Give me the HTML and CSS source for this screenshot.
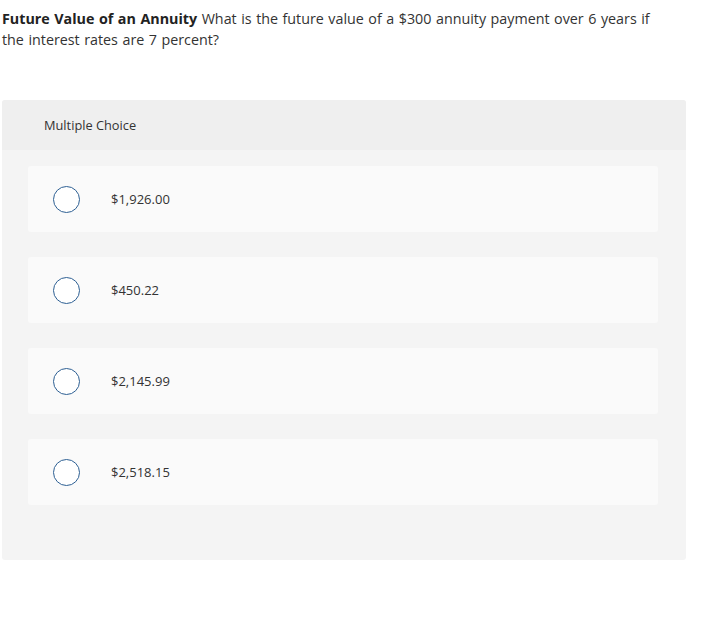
FILE: index.html
```html
<!DOCTYPE html>
<html>
<head>
<meta charset="utf-8">
<link rel="stylesheet" href="styles.css">
</head>
<body>
<div class="page">
  <p class="question"><strong>Future Value of an Annuity</strong> What is the future value of a $300 annuity payment over 6 years if the interest rates are 7 percent?</p>
  <div class="card">
    <div class="card-head">Multiple Choice</div>
    <div class="card-body">
      <div class="option"><span class="radio"></span><span class="label">$1,926.00</span></div>
      <div class="option"><span class="radio"></span><span class="label">$450.22</span></div>
      <div class="option"><span class="radio"></span><span class="label">$2,145.99</span></div>
      <div class="option"><span class="radio"></span><span class="label">$2,518.15</span></div>
    </div>
  </div>
</div>
</body>
</html>
```

FILE: styles.css
```css
html, body {
  margin: 0;
  padding: 0;
  background: #ffffff;
}
.page {
  padding: 0 2px;
  width: 684px;
  font-family: "Open Sans", Lato, sans-serif;
  color: #333333;
}
.question {
  margin: 8px 0 0 0;
  font-size: 14.3px;
  line-height: 21px;
  width: 660px;
  word-spacing: 0.8px;
}
.question strong {
  font-weight: 700;
  color: #222;
}
.card {
  margin-top: 50px;
  border-radius: 3px;
  overflow: hidden;
  background: #f4f4f4;
}
.card-head {
  height: 50px;
  background: #efefef;
  display: flex;
  align-items: center;
  padding-left: 42px;
  font-size: 12.8px;
  color: #333;
}
.card-body {
  padding: 16px 28px 55px 26px;
  display: flex;
  flex-direction: column;
  gap: 25px;
}
.option {
  height: 66px;
  background: #fafafa;
  border-radius: 3px;
  display: flex;
  align-items: center;
  padding-left: 25px;
}
.radio {
  width: 25px;
  height: 25px;
  border: 1px solid #2d5f93;
  border-radius: 50%;
  background: #fff;
  flex: none;
}
.label {
  margin-left: 31px;
  font-size: 13px;
  color: #333;
}
```
